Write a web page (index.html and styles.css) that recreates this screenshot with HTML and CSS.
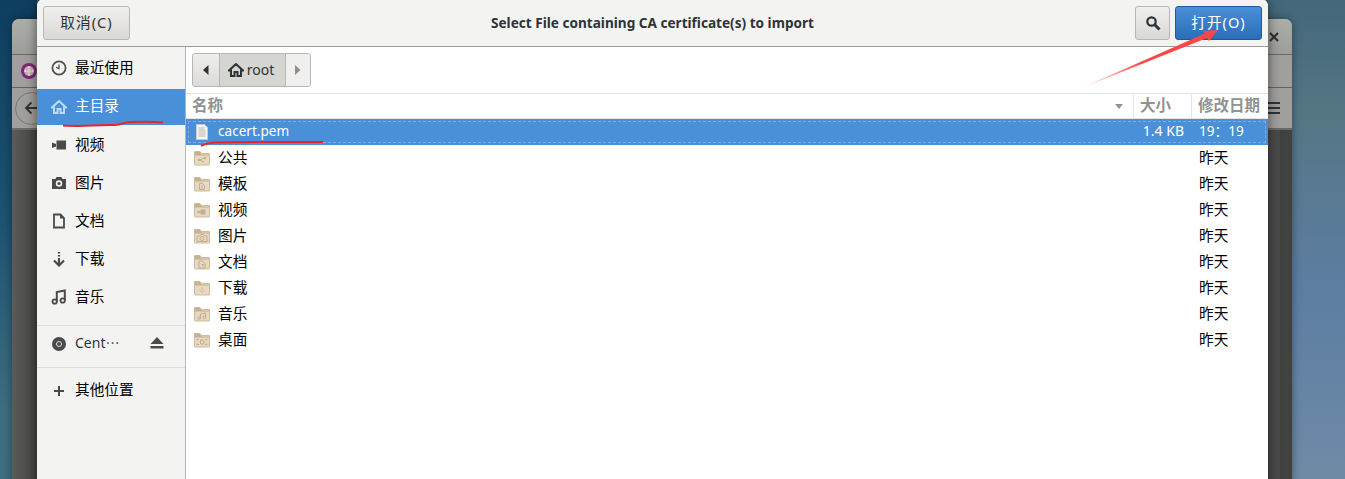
FILE: index.html
```html
<!DOCTYPE html>
<html lang="zh">
<head>
<meta charset="utf-8">
<title>Select File containing CA certificate(s) to import</title>
<link rel="stylesheet" href="styles.css">
</head>
<body>
<svg width="0" height="0" class="defs">
  <symbol id="folder" viewBox="0 0 16 16">
    <path d="M.5 1.500h5.500l2 2h7a.5.5 0 0 1 .5.5v10.500a.5.5 0 0 1-.5.5H1a.5.5 0 0 1-.5-.5z" fill="#e6d8c2" stroke="#cfbb9c"/>
    <path d="M1 2h4.800l2 2.500H15V5.500H1z" fill="#c6b08f"/>
  </symbol>
</svg>
<div class="desktop">
  <div class="bgwin">
    <div class="bg-title"><svg class="bg-close" width="10" height="10" viewBox="0 0 10 10"><path d="M1 1l8 8M9 1l-8 8" stroke="#2e3436" stroke-width="2.200"/></svg></div>
    <div class="bg-tabs">
      <svg class="bg-logo" width="16" height="16" viewBox="0 0 16 16"><circle cx="8" cy="8" r="8" fill="#7d2a72"/><circle cx="8" cy="8" r="5" fill="#c9a9c2"/><circle cx="8" cy="8" r="2" fill="#e6d0a8"/><circle cx="8" cy="4.500" r="1.100" fill="#efe6ee"/><circle cx="8" cy="11.500" r="1.100" fill="#efe6ee"/><circle cx="4.500" cy="8" r="1.100" fill="#efe6ee"/><circle cx="11.500" cy="8" r="1.100" fill="#efe6ee"/></svg>
    </div>
    <div class="bg-nav">
      <span class="bg-back"><svg width="14" height="14" viewBox="0 0 14 14"><path d="M13 7H2M7.500 1.500L2 7l5.500 5.500" fill="none" stroke="#2e3436" stroke-width="1.800"/></svg></span>
      <span class="bg-menu"></span>
    </div>
    <div class="bg-body"><span class="bg-left"></span><span class="bg-mid"></span><span class="bg-right"></span></div>
  </div>

  <main class="dialog">
    <header class="head">
      <button class="btn cancel">取消(C)</button>
      <h1 class="title">Select File containing CA certificate(s) to import</h1>
      <button class="btn search" aria-label="search">
        <svg width="16" height="16" viewBox="0 0 16 16"><circle cx="6.500" cy="6.500" r="4.200" fill="none" stroke="#2e3436" stroke-width="2.200"/><path d="M9.500 9.500l5 5" stroke="#2e3436" stroke-width="3"/></svg>
      </button>
      <button class="btn open">打开(O)</button>
    </header>
    <div class="content">
      <nav class="side">
        <ul class="places">
          <li class="place"><svg class="pi" viewBox="0 0 16 16"><circle cx="8" cy="8" r="6.600" fill="none" stroke="#505050" stroke-width="1.800"/><path d="M8 4.500V8.600L5 7.400" fill="none" stroke="#505050" stroke-width="1.300"/></svg><span class="t">最近使用</span></li>
          <li class="place active"><svg class="pi" viewBox="0 0 16 16"><path d="M8 2L1 8.500h2V14h3.500v-4h3v4H13V8.500h2z" fill="none" stroke="#bcd9f7" stroke-width="2"/></svg><span class="t">主目录</span></li>
          <li class="place"><svg class="pi" viewBox="0 0 16 16"><path d="M5.500 3.500h9.500v9H5.500zM1 5.500L5 7v2.500l-4 1.500z" fill="#4a4a4a"/></svg><span class="t">视频</span></li>
          <li class="place"><svg class="pi" viewBox="0 0 16 16"><path d="M1 4h3.500l1-2h5l1 2H15v10H1z" fill="#4a4a4a"/><circle cx="8" cy="8.500" r="3.200" fill="#f3f3f2"/><circle cx="8" cy="8.500" r="1.600" fill="#4a4a4a"/></svg><span class="t">图片</span></li>
          <li class="place"><svg class="pi" viewBox="0 0 16 16"><path d="M3 1.500h6.500L13 5v9.500H3z" fill="none" stroke="#4a4a4a" stroke-width="1.800"/><path d="M9 1.500V5.500h4" fill="#4a4a4a"/></svg><span class="t">文档</span></li>
          <li class="place"><svg class="pi" viewBox="0 0 16 16"><path d="M8 1v1.500M8 4v1.500M8 7v6" stroke="#4a4a4a" stroke-width="2.200"/><path d="M3 9.500l5 5 5-5" fill="none" stroke="#4a4a4a" stroke-width="2.200"/></svg><span class="t">下载</span></li>
          <li class="place"><svg class="pi" viewBox="0 0 16 16"><path d="M5.800 12.500V3l8-1.500V11" fill="none" stroke="#4a4a4a" stroke-width="2"/><circle cx="3.700" cy="12.500" r="2.200" fill="none" stroke="#4a4a4a" stroke-width="1.800"/><circle cx="11.700" cy="11.500" r="2.200" fill="none" stroke="#4a4a4a" stroke-width="1.800"/></svg><span class="t">音乐</span></li>
        </ul>
        <div class="sep sep-a"></div>
        <div class="place media"><svg class="pi" viewBox="0 0 16 16"><circle cx="8" cy="8" r="7" fill="#4a4a4a"/><circle cx="8" cy="8" r="2.500" fill="none" stroke="#ddd" stroke-width="1"/></svg><span class="t latin">Cent⋯</span><svg class="eject" viewBox="0 0 14 12"><path d="M7 0l6.500 7H.500zM.500 9h13v2.500H.500z" fill="#4a4a4a"/></svg></div>
        <div class="sep sep-b"></div>
        <div class="place other"><svg class="pi" viewBox="0 0 16 16"><path d="M8 3v10M3 8h10" stroke="#4a4a4a" stroke-width="2"/></svg><span class="t">其他位置</span></div>
      </nav>
      <section class="files">
        <div class="pathrow">
          <div class="pathbar">
            <span class="seg arrow"><svg width="6" height="10" viewBox="0 0 6 10"><path d="M5.500 0v10L0 5z" fill="#2e3436"/></svg></span>
            <span class="seg crumb"><svg width="16" height="16" viewBox="0 0 16 16"><path d="M8 2L1 8.500h2V14h3.500v-4h3v4H13V8.500h2z" fill="none" stroke="#2e3436" stroke-width="2"/></svg><span class="latin">root</span></span>
            <span class="seg arrow next"><svg width="6" height="10" viewBox="0 0 6 10"><path d="M0 0v10l5.500-5z" fill="#8b8e8f"/></svg></span>
          </div>
        </div>
        <div class="cols">
          <span class="col c-name"><span class="t">名称</span><i class="sort"></i></span>
          <span class="col c-size"><span class="t">大小</span></span>
          <span class="col c-date"><span class="t">修改日期</span></span>
        </div>
        <ul class="rows">
          <li class="row selected"><svg class="fi" viewBox="0 0 16 16"><path d="M2.500.5h8l3 3v12h-11z" fill="#f4f4f2" stroke="#c9c9c5"/><path d="M4.500 4h6M4.500 6h7M4.500 8h7M4.500 10h7M4.500 12h7" stroke="#b8b8b4"/></svg><span class="n file">cacert.pem</span><span class="s latin">1.4 KB</span><span class="d time">19：19</span></li>
          <li class="row"><svg class="fi" viewBox="0 0 16 16"><use href="#folder"/><path d="M5 10l6-2M5 10l5 2" fill="none" stroke="#c4ae8e"/><circle cx="5" cy="10" r="1.300" fill="#c4ae8e"/><circle cx="11" cy="8" r="1.300" fill="#c4ae8e"/></svg><span class="n">公共</span><span class="s"></span><span class="d">昨天</span></li>
          <li class="row"><svg class="fi" viewBox="0 0 16 16"><use href="#folder"/><path d="M5.500 7.500h3l2 2v4h-5zM7 10h2M7 12h2" fill="none" stroke="#c4ae8e"/></svg><span class="n">模板</span><span class="s"></span><span class="d">昨天</span></li>
          <li class="row"><svg class="fi" viewBox="0 0 16 16"><use href="#folder"/><path d="M6.500 7.500h5v5h-5zM3.500 8.500l3 1v1l-3 1z" fill="#c4ae8e"/></svg><span class="n">视频</span><span class="s"></span><span class="d">昨天</span></li>
          <li class="row"><svg class="fi" viewBox="0 0 16 16"><use href="#folder"/><path d="M3 8h2.500l1-1.500h3L10.500 8H13v5.500H3z" fill="none" stroke="#c4ae8e"/><circle cx="8" cy="10.500" r="2" fill="none" stroke="#c4ae8e"/></svg><span class="n">图片</span><span class="s"></span><span class="d">昨天</span></li>
          <li class="row"><svg class="fi" viewBox="0 0 16 16"><use href="#folder"/><path d="M5 7h3.500L11 9.500v4.500H5z" fill="none" stroke="#c4ae8e"/><path d="M8 10h1.500v2H8z" fill="#c4ae8e"/></svg><span class="n">文档</span><span class="s"></span><span class="d">昨天</span></li>
          <li class="row"><svg class="fi" viewBox="0 0 16 16"><use href="#folder"/><path d="M8 7v3M5.500 10L8 12.500 10.500 10" fill="none" stroke="#cdb896"/></svg><span class="n">下载</span><span class="s"></span><span class="d">昨天</span></li>
          <li class="row"><svg class="fi" viewBox="0 0 16 16"><use href="#folder"/><path d="M6.500 12V8l5-1v4.500" fill="none" stroke="#c4ae8e"/><circle cx="5.300" cy="12" r="1.300" fill="none" stroke="#c4ae8e"/><circle cx="10.300" cy="11.500" r="1.300" fill="none" stroke="#c4ae8e"/></svg><span class="n">音乐</span><span class="s"></span><span class="d">昨天</span></li>
          <li class="row"><svg class="fi" viewBox="0 0 16 16"><use href="#folder"/><path d="M3 8.500V7.500h2M11 7.500h2v1M3 11.500v1h2M11 12.500h2v-1M6.500 8h2.500l1 1.500V12H6.500z" fill="none" stroke="#c4ae8e"/></svg><span class="n">桌面</span><span class="s"></span><span class="d">昨天</span></li>
        </ul>
      </section>
    </div>
  </main>

  <svg class="marks" width="1345" height="479" viewBox="0 0 1345 479">
    <defs><linearGradient id="fade" x1="1080" y1="89" x2="1218" y2="30" gradientUnits="userSpaceOnUse"><stop offset="0" stop-color="#ff4545" stop-opacity=".05"/><stop offset=".45" stop-color="#ff4545"/></linearGradient></defs>
    <path d="M1079 89L1205 33.500l-2-2.500 15-1-9 11-2-3z" fill="url(#fade)"/>
    <path d="M63 125.500c14 1 38 0 52-.5 7-.5 8-2.500 16-3 12-.5 24-.5 32 .5" fill="none" stroke="#e8262a" stroke-width="2"/>
    <path d="M201 146c3-2 8-3 14-3.500 30-1 78-.5 108-.5" fill="none" stroke="#e8262a" stroke-width="2"/>
  </svg>
</div>
</body>
</html>
```
FILE: styles.css
```css
* { box-sizing: border-box; }
html, body { margin: 0; padding: 0; }
body { font-family: "Noto Sans", "Noto Sans CJK SC", sans-serif; font-size: 14.67px; color: #000; overflow: hidden; }
.defs { position: absolute; }
.latin { font-size: 14px; }
.desktop { position: relative; width: 1345px; height: 479px; overflow: hidden;
  background: linear-gradient(180deg, #43687a 0%, #557685 25%, #5d7ea3 62%, #6e8ba6 100%); }
.desktop::before { content: ""; position: absolute; left: 0; top: 0; width: 37px; height: 479px; background: linear-gradient(180deg, #0e3e60 0%, #1c5272 45%, #3d6d80 85%, #3e6e82 100%); }

.bgwin { position: absolute; left: 12px; top: 19px; width: 1280px; height: 470px; border-radius: 7px 7px 0 0; background: #a5a4a1; box-shadow: 0 0 8px rgba(0,0,0,.4); overflow: hidden; display: flex; flex-direction: column; }
.bg-title { height: 36px; flex: none; border-bottom: 1px solid #6a6a68; display: flex; justify-content: flex-end; align-items: center; padding-right: 13px; background: linear-gradient(#adadaa, #9d9d9a); }
.bg-tabs { height: 33px; flex: none; border-bottom: 1px solid #636361; display: flex; align-items: center; padding-left: 9px; background: #a09f9d; }
.bg-nav { height: 42px; flex: none; display: flex; align-items: center; justify-content: space-between; padding: 0 12px 0 3px; border-bottom: 2px solid #6a6a68; background: #a09f9d; }
.bg-back { width: 33px; height: 33px; border: 1px solid #77776f; border-radius: 50%; display: flex; align-items: center; justify-content: flex-start; padding-left: 8px; }
.bg-menu { width: 13px; height: 12px; border-top: 2px solid #2e3436; border-bottom: 2px solid #2e3436; background: linear-gradient(#2e3436, #2e3436) center / 100% 2px no-repeat; }
.bg-body { flex: 1; display: flex; }
.bg-left { width: 25px; background: linear-gradient(90deg, #5b5b59, #444); }
.bg-mid { flex: 1; background: #4a4a4a; }
.bg-right { width: 12px; background: #414240; }

.dialog { position: absolute; left: 37px; top: -1px; width: 1231px; height: 490px; background: #fff; border-radius: 7px 7px 0 0; box-shadow: 0 0 12px rgba(0,0,0,.55); overflow: hidden; display: flex; flex-direction: column; }
.head { height: 48px; flex: none; display: flex; align-items: center; padding: 0 6px; background: #f3f3f2; border-bottom: 1px solid #9c9e9c; }
.btn { height: 34px; border: 1px solid #b6b6b3; border-radius: 3px; background: linear-gradient(#f1f0ef, #d9d8d5); font: inherit; letter-spacing: 1px; color: #2e3436; padding: 0 0 2px; display: flex; align-items: center; justify-content: center; }
.cancel { width: 87px; }
.title { flex: 1; margin: 0; text-align: center; font-size: 13.6px; font-weight: 700; color: #2e3436; padding: 0 0 1px 40px; }
.search { width: 35px; margin-right: 5px; padding: 0; }
.open { width: 87px; color: #fff; border-color: #1f5a9b; background: linear-gradient(#4a8fd8, #2a6db8); }

.content { flex: 1; display: flex; min-height: 0; }
.side { width: 149px; flex: none; background: #f3f3f2; border-right: 1px solid #b5b5b3; padding-top: 2px; }
.places { list-style: none; margin: 0; padding: 0; }
.place { height: 38px; display: flex; align-items: center; padding-left: 14px; gap: 8px; color: #000; }
.t { padding-bottom: 4px; }
.active .t { padding-bottom: 5px; }
.pi { width: 16px; height: 16px; flex: none; }
.active { background: #4a90d9; color: #fff; height: 36px; margin: 2px 0 1px; }
.sep { height: 1px; background: #dcdcda; }
.sep-a { margin-top: 9px; }
.media { height: 36px; margin-bottom: 5px; }
.media .latin { color: #2e3436; width: 67px; }
.eject { width: 14px; height: 12px; margin-top: -2px; }
.other { height: 45px; }

.files { flex: 1; min-width: 0; display: flex; flex-direction: column; }
.pathrow { height: 46px; flex: none; padding: 6px 0 0 6px; }
.pathbar { display: inline-flex; height: 34px; border: 1px solid #b6b6b3; border-radius: 3px; overflow: hidden; background: #f0efee; }
.seg { display: flex; align-items: center; justify-content: center; }
.arrow { width: 26px; background: linear-gradient(#efeeec, #dcdbd9); }
.next { width: 24px; background: #f0efee; }
.crumb { width: 67px; gap: 3px; padding: 0 3px 0 0; background: #d5d5d2; border-left: 1px solid #b6b6b3; border-right: 1px solid #b6b6b3; color: #2e3436; }
.crumb .latin { padding-bottom: 1px; }
.cols { height: 26px; flex: none; display: flex; align-items: center; border-top: 1px solid #e4e4e2; border-bottom: 1px solid #e4e4e2; color: #909393; font-weight: 700; font-size: 15.5px; }
.col { height: 100%; display: flex; align-items: center; padding-left: 6px; }
.col .t { padding-bottom: 3px; }
.c-name { width: 948px; position: relative; border-right: 1px solid #e4e4e2; }
.sort { position: absolute; right: 10px; top: 10px; border: 4px solid transparent; border-top: 5px solid #909393; border-bottom: 0; }
.c-size { width: 58px; border-right: 1px solid #e4e4e2; }
.c-date { flex: 1; }
.rows { list-style: none; margin: 0; padding: 0; }
.row { height: 26px; display: flex; align-items: center; padding-left: 8px; }
.row .n, .row .s, .row .d { padding-bottom: 4px; }
.selected { background: #4a90d9; color: #fff; outline: 1px dashed #7aaee6; outline-offset: -3px; }
.fi { width: 16px; height: 16px; flex: none; }
.n { width: 926px; padding-left: 8px; }
.file { font-size: 13.6px; }
.s { width: 48px; text-align: right; }
.d { padding-left: 15px; }
.time { font-size: 13.6px; }
.marks { position: absolute; left: 0; top: 0; pointer-events: none; }
```
